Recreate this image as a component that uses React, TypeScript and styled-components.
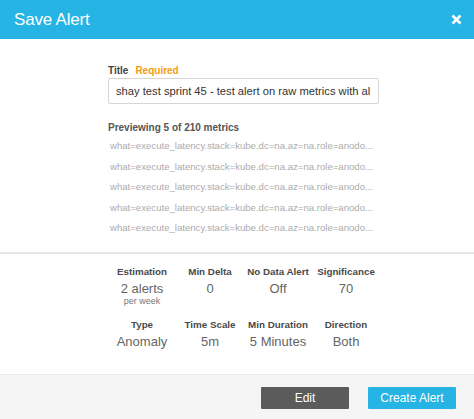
import React from "react";
import styled, { createGlobalStyle } from "styled-components";

const Global = createGlobalStyle`
  html, body { margin: 0; padding: 0; background: #fff; }
  body { font-family: "Liberation Sans", Arial, sans-serif; }
  * { box-sizing: border-box; }
`;

const Dialog = styled.div`
  width: 474px;
  height: 419px;
  display: flex;
  flex-direction: column;
  background: #fff;
  overflow: hidden;
`;

const Header = styled.div`
  height: 39px;
  flex: none;
  background: #25b4e4;
  display: flex;
  align-items: center;
  justify-content: space-between;
  padding: 0 11px 0 14px;
  color: #fff;
`;

const HeaderTitle = styled.div`
  font-size: 17px;
  letter-spacing: -0.2px;
`;

const Close = styled.button`
  border: 0;
  background: none;
  padding: 0;
  width: 14px;
  height: 14px;
  display: flex;
  align-items: center;
  justify-content: center;
  cursor: pointer;
`;

const Body = styled.div`
  padding: 25px 0 0 108px;
  height: 213px;
  flex: none;
`;

const Column = styled.div`
  width: 270px;
`;

const FieldLabel = styled.div`
  font-size: 10px;
  font-weight: bold;
  color: #444;
  line-height: 13px;
  display: flex;
  gap: 7px;
`;

const Required = styled.span`
  color: #f39c12;
`;

const TitleInput = styled.input`
  margin-top: 1px;
  width: 271px;
  height: 26px;
  border: 1px solid #d6d6d6;
  border-radius: 2px;
  padding: 0 7px;
  font-family: "Liberation Sans", Arial, sans-serif;
  font-size: 11.2px;
  color: #333;
  outline: none;
`;

const PreviewLabel = styled.div`
  margin-top: 17px;
  font-size: 10px;
  font-weight: bold;
  color: #555;
  line-height: 13px;
`;

const MetricList = styled.div`
  margin-top: 5px;
  display: flex;
  flex-direction: column;
`;

const Metric = styled.div`
  height: 20.5px;
  line-height: 14px;
  padding-left: 2px;
  font-size: 9.6px;
  color: #acacac;
  white-space: nowrap;
`;

const Divider = styled.div`
  height: 2px;
  flex: none;
  background: #e6e6e6;
`;

const Stats = styled.div`
  flex: 1;
  padding: 11px 0 0 108px;
`;

const StatGrid = styled.div`
  width: 272px;
  display: grid;
  grid-template-columns: repeat(4, 68px);
  row-gap: 3px;
`;

const Stat = styled.div`
  display: flex;
  flex-direction: column;
  align-items: center;
  height: 50px;
`;

const StatLabel = styled.div`
  font-size: 9.8px;
  font-weight: bold;
  color: #4a4a4a;
  line-height: 13px;
  white-space: nowrap;
`;

const StatValue = styled.div`
  font-size: 13px;
  color: #666;
  line-height: 17px;
  margin-top: 2px;
  white-space: nowrap;
`;

const StatNote = styled.div`
  font-size: 9px;
  color: #777;
  line-height: 9px;
`;

const Footer = styled.div`
  height: 45px;
  flex: none;
  background: #f5f5f5;
  border-top: 1px solid #ebebeb;
  display: flex;
  align-items: flex-start;
  justify-content: flex-end;
  padding: 12px 18px 0 0;
  gap: 19px;
`;

const Button = styled.button<{ $primary?: boolean }>`
  width: 88px;
  height: 22px;
  border: 0;
  border-radius: 1px;
  background: ${(p) => (p.$primary ? "#25b4e4" : "#5b5b5b")};
  color: #fff;
  font-family: "Liberation Sans", Arial, sans-serif;
  font-size: 12px;
  cursor: pointer;
  padding: 0;
`;

const metric = "what=execute_latency.stack=kube.dc=na.az=na.role=anodo...";

const stats: { label: string; value: string; note?: string }[] = [
  { label: "Estimation", value: "2 alerts", note: "per week" },
  { label: "Min Delta", value: "0" },
  { label: "No Data Alert", value: "Off" },
  { label: "Significance", value: "70" },
  { label: "Type", value: "Anomaly" },
  { label: "Time Scale", value: "5m" },
  { label: "Min Duration", value: "5 Minutes" },
  { label: "Direction", value: "Both" },
];

export default function App() {
  return (
    <>
      <Global />
      <Dialog>
        <Header>
          <HeaderTitle>Save Alert</HeaderTitle>
          <Close aria-label="Close">
            <svg width="11" height="11" viewBox="0 0 11 11">
              <path
                d="M1.5 1.5 L9.5 9.5 M9.5 1.5 L1.5 9.5"
                stroke="#fff"
                strokeWidth="2.6"
                strokeLinecap="butt"
              />
            </svg>
          </Close>
        </Header>
        <Body>
          <Column>
            <FieldLabel>
              Title <Required>Required</Required>
            </FieldLabel>
            <TitleInput
              readOnly
              value="shay test sprint 45 - test alert on raw metrics with al"
            />
            <PreviewLabel>Previewing 5 of 210 metrics</PreviewLabel>
            <MetricList>
              {[0, 1, 2, 3, 4].map((i) => (
                <Metric key={i}>{metric}</Metric>
              ))}
            </MetricList>
          </Column>
        </Body>
        <Divider />
        <Stats>
          <StatGrid>
            {stats.map((s) => (
              <Stat key={s.label}>
                <StatLabel>{s.label}</StatLabel>
                <StatValue>{s.value}</StatValue>
                {s.note && <StatNote>{s.note}</StatNote>}
              </Stat>
            ))}
          </StatGrid>
        </Stats>
        <Footer>
          <Button>Edit</Button>
          <Button $primary>Create Alert</Button>
        </Footer>
      </Dialog>
    </>
  );
}
